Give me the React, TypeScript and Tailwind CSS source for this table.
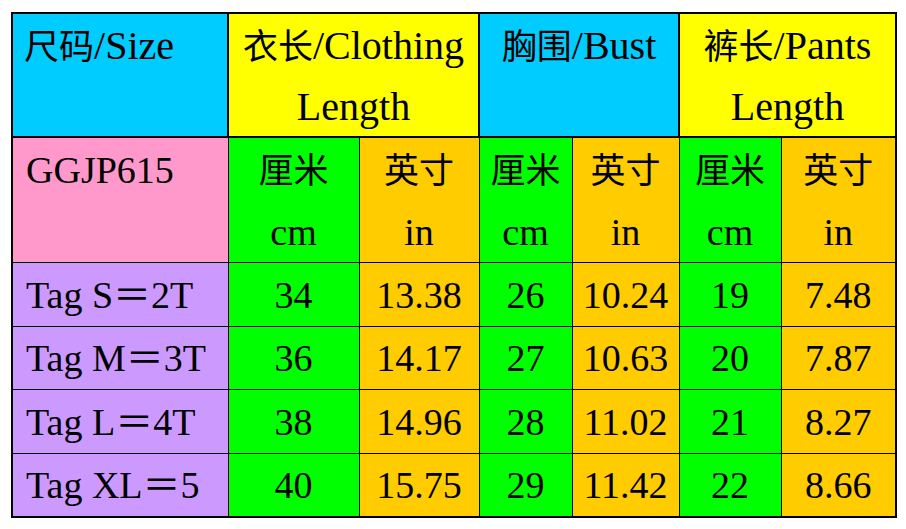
import React from "react"

const rows = [
  ["Tag S＝2T", "34", "13.38", "26", "10.24", "19", "7.48"],
  ["Tag M＝3T", "36", "14.17", "27", "10.63", "20", "7.87"],
  ["Tag L＝4T", "38", "14.96", "28", "11.02", "21", "8.27"],
  ["Tag XL＝5", "40", "15.75", "29", "11.42", "22", "8.66"],
]

const heights = ["h-[64px]", "h-[63px]", "h-[64px]", "h-[63px]"]

function Cjk({ children }: { children: React.ReactNode }) {
  return <span className="text-[35px]">{children}</span>
}

export default function App() {
  return (
    <div className="w-[906px] h-[529px] bg-white pl-[11px] pt-[12px] font-['Liberation_Serif','Noto_Sans_CJK_SC',serif] text-black">
      <table className="w-[884px] table-fixed border-collapse border-2 border-black">
        <colgroup>
          <col className="w-[216px]" />
          <col className="w-[131px]" />
          <col className="w-[120px]" />
          <col className="w-[93px]" />
          <col className="w-[107px]" />
          <col className="w-[102px]" />
          <col className="w-[115px]" />
        </colgroup>
        <tbody>
          <tr className="h-[120px] text-[40px] leading-[59px] align-top">
            <td className="bg-[#00ccff] border-2 border-black pl-[11px] pt-[2px] whitespace-nowrap">
              <Cjk>尺码</Cjk>/Size
            </td>
            <td colSpan={2} className="bg-[#ffff00] border-2 border-black text-center pt-[2px] whitespace-nowrap">
              <Cjk>衣长</Cjk>/Clothing
              <br />
              Length
            </td>
            <td colSpan={2} className="bg-[#00ccff] border-2 border-black text-center pt-[2px] whitespace-nowrap">
              <Cjk>胸围</Cjk>/Bust
            </td>
            <td colSpan={2} className="bg-[#ffff00] border-2 border-black text-center pt-[2px] whitespace-nowrap">
              <Cjk>裤长</Cjk>/Pants
              <br />
              Length
            </td>
          </tr>
          <tr className="h-[123px] text-[38px] leading-[60px] align-top">
            <td className="bg-[#ff99cc] border border-black pl-[13px] pt-[2px]">GGJP615</td>
            {[0, 1, 2, 3, 4, 5].map((i) => (
              <td
                key={i}
                className={`border border-black text-center pt-[2px] ${i % 2 === 0 ? "bg-[#00ff00]" : "bg-[#ffcc00]"}`}
              >
                <Cjk>{i % 2 === 0 ? "厘米" : "英寸"}</Cjk>
                <br />
                {i % 2 === 0 ? "cm" : "in"}
              </td>
            ))}
          </tr>
          {rows.map((r, ri) => (
            <tr key={ri} className={`${heights[ri]} text-[38px] leading-none`}>
              {r.map((v, ci) => (
                <td
                  key={ci}
                  className={`border border-black whitespace-nowrap ${
                    ci === 0 ? "bg-[#cc99ff] pl-[13px] text-left" : ci % 2 === 1 ? "bg-[#00ff00] text-center" : "bg-[#ffcc00] text-center"
                  }`}
                >
                  {v}
                </td>
              ))}
            </tr>
          ))}
        </tbody>
      </table>
    </div>
  )
}
